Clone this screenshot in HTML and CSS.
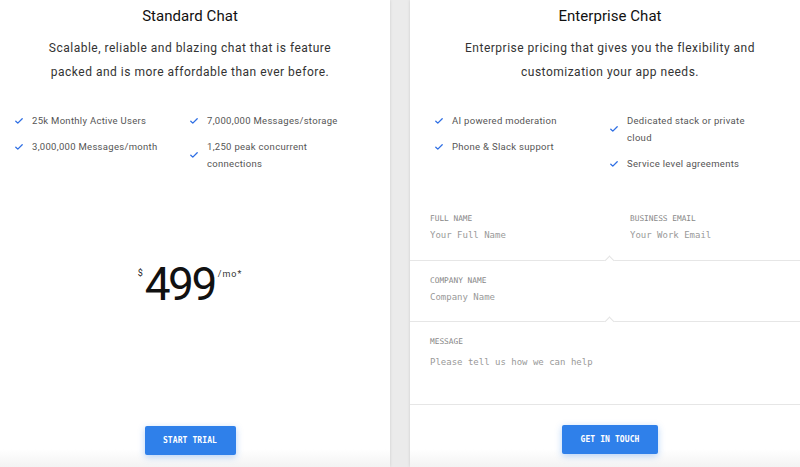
FILE: index.html
```html
<!DOCTYPE html>
<html lang="en">
<head>
<meta charset="utf-8">
<title>Pricing</title>
<link rel="stylesheet" href="styles.css">
</head>
<body>
<div class="cards">
  <section class="card">
    <h2 class="title">Standard Chat</h2>
    <p class="desc">Scalable, reliable and blazing chat that is feature<br>packed and is more affordable than ever before.</p>
    <div class="features">
      <ul class="col">
        <li><svg class="check" viewBox="0 0 8 6"><path d="M0.8 3.2l2 1.9 4.4-4.4"/></svg><span>25k Monthly Active Users</span></li>
        <li><svg class="check" viewBox="0 0 8 6"><path d="M0.8 3.2l2 1.9 4.4-4.4"/></svg><span>3,000,000 Messages/month</span></li>
      </ul>
      <ul class="col">
        <li><svg class="check" viewBox="0 0 8 6"><path d="M0.8 3.2l2 1.9 4.4-4.4"/></svg><span>7,000,000 Messages/storage</span></li>
        <li><svg class="check" viewBox="0 0 8 6"><path d="M0.8 3.2l2 1.9 4.4-4.4"/></svg><span>1,250 peak concurrent<br>connections</span></li>
      </ul>
    </div>
    <div class="price">
      <span class="cur">$</span><span class="amount">499</span><span class="per">/mo*</span>
    </div>
    <div class="actions"><button class="btn btn-trial">START TRIAL</button></div>
  </section>

  <section class="card">
    <h2 class="title">Enterprise Chat</h2>
    <p class="desc">Enterprise pricing that gives you the flexibility and<br>customization your app needs.</p>
    <div class="features">
      <ul class="col">
        <li><svg class="check" viewBox="0 0 8 6"><path d="M0.8 3.2l2 1.9 4.4-4.4"/></svg><span>AI powered moderation</span></li>
        <li><svg class="check" viewBox="0 0 8 6"><path d="M0.8 3.2l2 1.9 4.4-4.4"/></svg><span>Phone &amp; Slack support</span></li>
      </ul>
      <ul class="col">
        <li><svg class="check" viewBox="0 0 8 6"><path d="M0.8 3.2l2 1.9 4.4-4.4"/></svg><span>Dedicated stack or private<br>cloud</span></li>
        <li><svg class="check" viewBox="0 0 8 6"><path d="M0.8 3.2l2 1.9 4.4-4.4"/></svg><span>Service level agreements</span></li>
      </ul>
    </div>
    <form class="form">
      <div class="row row-split row-first">
        <label class="field"><span class="label">FULL NAME</span><input class="input" placeholder="Your Full Name"></label>
        <label class="field"><span class="label">BUSINESS EMAIL</span><input class="input" placeholder="Your Work Email"></label>
      </div>
      <div class="row row-split">
        <label class="field"><span class="label">COMPANY NAME</span><input class="input" placeholder="Company Name"></label>
      </div>
      <div class="row row-message">
        <label class="field"><span class="label">MESSAGE</span><textarea class="input textarea" placeholder="Please tell us how we can help"></textarea></label>
      </div>
    </form>
    <div class="actions actions-form"><button class="btn btn-touch" type="button">GET IN TOUCH</button></div>
  </section>
</div>
</body>
</html>
```

FILE: styles.css
```css
* { box-sizing: border-box; }
html, body { margin: 0; padding: 0; }
body {
  background: #ebebeb;
  overflow: hidden;
  width: 800px;
  height: 467px;
  font-family: Roboto, "Liberation Sans", sans-serif;
}
.cards {
  display: flex;
  gap: 20px;
  margin-left: -10px;
  height: 467px;
}
.card {
  flex: 0 0 400px;
  width: 400px;
  height: 467px;
  display: flex;
  flex-direction: column;
  background: linear-gradient(to bottom, #ffffff calc(100% - 18px), #f3f3f3 100%);
  box-shadow: 0 0 3px rgba(0, 0, 0, 0.13);
}
.title {
  margin: 6px 0 0;
  font-size: 15px;
  line-height: 20px;
  font-weight: 400;
  letter-spacing: 0.05px;
  color: #111;
  text-align: center;
}
.desc {
  margin: 10px 0 0;
  font-size: 12px;
  line-height: 24px;
  letter-spacing: 0.5px;
  color: #333;
  text-align: center;
}
.features {
  display: grid;
  grid-template-columns: 175px 175px;
  width: 350px;
  margin: 28px auto 0;
}
.col {
  list-style: none;
  margin: 0;
  padding: 0;
  display: flex;
  flex-direction: column;
  gap: 9px;
}
.col li {
  display: flex;
  align-items: center;
  gap: 9px;
  font-size: 9.5px;
  line-height: 17px;
  letter-spacing: 0.3px;
  color: #555;
}
.check {
  flex: 0 0 8px;
  width: 8px;
  height: 6px;
  fill: none;
  stroke: #2f6fe4;
  stroke-width: 1.3;
  stroke-linecap: round;
  stroke-linejoin: round;
}
.price {
  display: flex;
  align-items: flex-start;
  justify-content: center;
  margin-top: 89px;
  color: #111;
}
.cur {
  font-size: 9px;
  line-height: 10px;
  margin-top: 7px;
  margin-right: 2px;
  color: #222;
}
.amount {
  font-size: 46px;
  line-height: 46px;
  letter-spacing: -2.5px;
  font-weight: 400;
}
.per {
  font-size: 9px;
  line-height: 10px;
  margin-top: 8px;
  margin-left: 3px;
  letter-spacing: 1px;
  color: #333;
}
.actions {
  margin-top: auto;
  margin-bottom: 12px;
  display: flex;
  justify-content: center;
}
.actions-form { margin-bottom: 13px; }
.btn {
  border: 0;
  border-radius: 2px;
  background: #2f80ea;
  color: #fff;
  font-family: "DejaVu Sans Mono", monospace;
  font-weight: 700;
  font-size: 8px;
  letter-spacing: 0.1px;
  height: 29px;
  box-shadow: 0 2px 7px rgba(47, 128, 234, 0.35);
  cursor: pointer;
}
.btn-trial { width: 91px; }
.btn-touch { width: 96px; }
.form {
  margin-top: 27px;
  display: flex;
  flex-direction: column;
}
.row {
  position: relative;
  display: flex;
  border-bottom: 1px solid #e6e6e6;
  padding: 14px 0 17px;
}
.row-first { padding-bottom: 18px; }
.row-split::after {
  content: "";
  position: absolute;
  left: 50%;
  bottom: -4px;
  width: 6px;
  height: 6px;
  margin-left: -4px;
  background: #fff;
  border-left: 1px solid #e4e4e4;
  border-top: 1px solid #e4e4e4;
  transform: rotate(45deg);
}
.row-message { padding-bottom: 35px; }
.field {
  flex: 0 0 50%;
  display: flex;
  flex-direction: column;
  padding: 0 20px;
}
.label {
  font-family: "DejaVu Sans Mono", monospace;
  font-size: 7.8px;
  line-height: 12px;
  color: #888;
}
.input {
  margin-top: 3px;
  padding: 0;
  border: 0;
  outline: none;
  background: transparent;
  font-family: "DejaVu Sans Mono", monospace;
  font-size: 9px;
  line-height: 14px;
  height: 14px;
  color: #555;
}
.input::placeholder { color: #999; }
.textarea {
  margin-top: 7px;
  resize: none;
  width: 320px;
  overflow: hidden;
}
```
